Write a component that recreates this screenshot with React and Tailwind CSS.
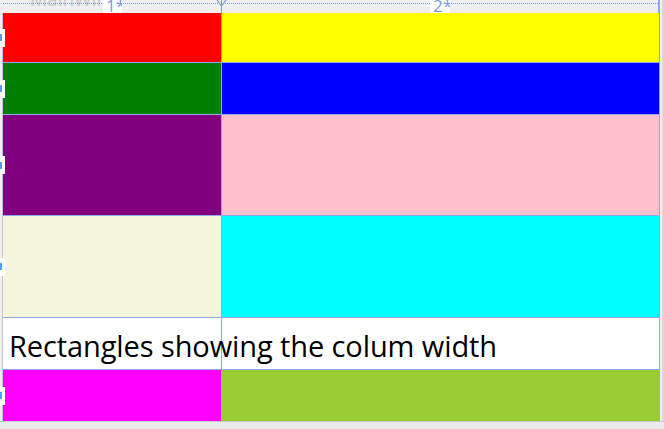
import React from "react";

const rows = [
  { h: "h-[49px]", a: "bg-[#ff0000]", b: "bg-[#ffff00]" },
  { h: "h-[51px]", a: "bg-[#008000]", b: "bg-[#0000ff]" },
  { h: "h-[100px]", a: "bg-[#800080]", b: "bg-[#ffc0cb]" },
  { h: "h-[101px]", a: "bg-[#f5f5dc]", b: "bg-[#00ffff]" },
  { h: "h-[51px]", text: true },
  { h: "h-[51px]", a: "bg-[#ff00ff]", b: "bg-[#9acd32]" },
];

function Handle() {
  return (
    <div className="absolute left-[-3px] top-1/2 -translate-y-1/2 w-[5px] h-[18px] bg-white flex items-center">
      <div className="w-[2px] h-[7px] bg-[#4aa0f0]" />
    </div>
  );
}

export default function App() {
  return (
    <div className="w-[664px] h-[429px] bg-[#f0f0f0] overflow-hidden flex flex-col" style={{ fontFamily: '"Open Sans", "Noto Sans", sans-serif' }}>
      {/* top ruler */}
      <div className="relative h-[13px] shrink-0 bg-[#efefef] overflow-hidden">
        <div className="absolute left-[30px] top-0 w-[73px] h-[13px] overflow-hidden">
          <div className="relative top-[-10px] text-[19px] text-[#c8c8c8] leading-none whitespace-nowrap">MainWindow</div>
        </div>
        <div className="absolute left-[3px] right-[6px] top-[3px] border-t border-dotted border-[#7c9ce6]" />
        <div className="absolute left-[103px] top-0 w-[19px] h-[13px] bg-white text-[#7b9ae2] text-[17px] leading-[13px] pl-[3px] overflow-hidden">
          <span className="relative top-[-1px]">1*</span>
        </div>
        <div className="absolute left-[430px] top-0 w-[20px] h-[13px] bg-white text-[#7b9ae2] text-[17px] leading-[13px] pl-[3px] overflow-hidden">
          <span className="relative top-[-1px]">2*</span>
        </div>
        <div className="absolute left-[221px] top-0 w-px h-[13px] bg-[#7c9ce6]" />
        <svg className="absolute left-[216px] top-0" width="11" height="7" viewBox="0 0 11 7">
          <path d="M1 0 L5.5 6 L10 0" fill="none" stroke="#7c9ce6" strokeWidth="1.2" />
        </svg>
        <div className="absolute left-[658px] top-0 w-[2px] h-[13px] bg-[#8aa9ea]" />
        <div className="absolute left-[662px] top-0 w-[2px] h-[13px] bg-[#d8d8d8]" />
      </div>
      <div className="flex">
        <div className="w-[2px] shrink-0" />
        <div className="w-px bg-[#c9c0dc] shrink-0" />
        <div className="w-[656px] flex flex-col gap-px bg-[#8ea8e8]">
          {rows.map((r, i) =>
            r.text ? (
              <div key={i} className={`relative ${r.h} bg-white flex items-center`}>
                <div className="absolute left-[218px] top-0 bottom-0 w-px bg-[#8ea8e8]" />
                <span className="relative top-[2px] pl-[6px] text-[29px] leading-none text-black whitespace-nowrap tracking-[-0.1px]">
                  Rectangles showing the colum width
                </span>
              </div>
            ) : (
              <div key={i} className={`relative flex gap-px ${r.h}`}>
                <div className={`w-[218px] ${r.a}`} />
                <div className={`flex-1 ${r.b}`} />
                <Handle />
              </div>
            )
          )}
        </div>
        <div className="w-px bg-[#8ea8e8] shrink-0" />
        <div className="w-[2px] bg-[#f0f0f0] shrink-0" />
        <div className="w-[2px] bg-[#d8d8d8] shrink-0" />
      </div>
      <div className="h-px bg-[#c8c8c8]" />
      <div className="flex-1 bg-[#ececec]" />
    </div>
  );
}
